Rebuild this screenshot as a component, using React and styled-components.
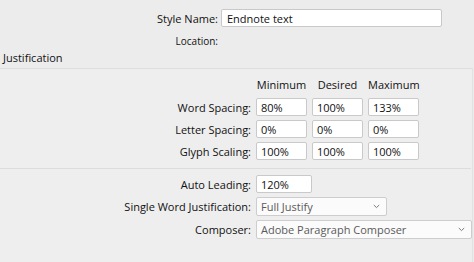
import React from "react";
import styled, { createGlobalStyle } from "styled-components";

const Global = createGlobalStyle`
  html, body { margin: 0; padding: 0; }
  body {
    background: #ececec;
    font-family: "Open Sans", "Noto Sans", sans-serif;
    font-size: 11px;
    color: #111111;
    width: 474px;
    height: 262px;
    overflow: hidden;
  }
`;

const Page = styled.div`
  display: flex;
  flex-direction: column;
  padding-top: 9px;
`;

const HeadRow = styled.div`
  display: flex;
  align-items: center;
  height: ${(p) => p.$h || 18}px;
  margin-top: ${(p) => p.$mt || 0}px;
`;

const HeadLabel = styled.div`
  width: 218px;
  text-align: right;
  margin-right: 3px;
  font-size: ${(p) => (p.$small ? 10 : 11)}px;
  white-space: nowrap;
`;

const TextBox = styled.div`
  box-sizing: border-box;
  width: ${(p) => p.$w}px;
  height: 18px;
  background: #ffffff;
  border: 1px solid #c9c9c9;
  border-radius: 2px;
  padding-left: ${(p) => p.$pl || 4}px;
  display: flex;
  align-items: center;
  font-size: 11px;
  color: #111111;
  white-space: nowrap;
`;

const SectionTitle = styled.div`
  margin-top: 4px;
  padding-left: 3px;
  height: 14px;
  line-height: 14px;
  font-size: 11px;
`;

const GroupBox = styled.div`
  margin-top: 3px;
  margin-right: 1px;
  height: 190px;
  border-top: 1px solid #dedede;
  border-right: 1px solid #e2e2e2;
  border-bottom: 1px solid #e4e4e4;
  background: #eeeeee;
  padding-top: 9px;
  display: flex;
  flex-direction: column;
`;

const Grid = styled.div`
  display: grid;
  grid-template-columns: 251px 51px 51px 51px;
  column-gap: 5px;
  row-gap: 4px;
  align-items: center;
`;

const ColHead = styled.div`
  text-align: center;
  height: 14px;
  line-height: 14px;
  margin-bottom: 2px;
`;

const RowLabel = styled.div`
  text-align: right;
  white-space: nowrap;
`;

const Separator = styled.div`
  height: 1px;
  background: #dcdcdc;
  margin-top: 8px;
  margin-right: 1px;
`;

const FieldList = styled.div`
  display: flex;
  flex-direction: column;
  gap: 4px;
  margin-top: 6px;
`;

const FieldRow = styled.div`
  display: flex;
  align-items: center;
  gap: 5px;
`;

const FieldLabel = styled.div`
  width: 251px;
  text-align: right;
  white-space: nowrap;
`;

const Select = styled.div`
  box-sizing: border-box;
  width: ${(p) => p.$w}px;
  height: 19px;
  background: #fbfbfb;
  border: 1px solid #cdcdcd;
  border-radius: 2px;
  padding: 0 6px 0 4px;
  display: flex;
  align-items: center;
  justify-content: space-between;
  color: #5a5a5a;
  white-space: nowrap;
`;

const Chevron = () => (
  <svg width="7" height="5" viewBox="0 0 7 5">
    <path d="M0.8 1 L3.5 3.6 L6.2 1" fill="none" stroke="#7a7a7a" strokeWidth="1" />
  </svg>
);

const rows = [
  ["Word Spacing:", "80%", "100%", "133%"],
  ["Letter Spacing:", "0%", "0%", "0%"],
  ["Glyph Scaling:", "100%", "100%", "100%"],
];

export default function App() {
  return (
    <>
      <Global />
      <Page>
        <HeadRow>
          <HeadLabel>Style Name:</HeadLabel>
          <TextBox $w={221} $pl={5}>Endnote text</TextBox>
        </HeadRow>
        <HeadRow $h={13} $mt={7}>
          <HeadLabel $small>Location:</HeadLabel>
        </HeadRow>
        <SectionTitle>Justification</SectionTitle>
        <GroupBox>
          <Grid>
            <span />
            <ColHead>Minimum</ColHead>
            <ColHead>Desired</ColHead>
            <ColHead>Maximum</ColHead>
            {rows.map((r) => (
              <React.Fragment key={r[0]}>
                <RowLabel>{r[0]}</RowLabel>
                <TextBox $w={51}>{r[1]}</TextBox>
                <TextBox $w={51}>{r[2]}</TextBox>
                <TextBox $w={51}>{r[3]}</TextBox>
              </React.Fragment>
            ))}
          </Grid>
          <Separator />
          <FieldList>
            <FieldRow>
              <FieldLabel>Auto Leading:</FieldLabel>
              <TextBox $w={56}>120%</TextBox>
            </FieldRow>
            <FieldRow>
              <FieldLabel>Single Word Justification:</FieldLabel>
              <Select $w={131}>
                Full Justify
                <Chevron />
              </Select>
            </FieldRow>
            <FieldRow>
              <FieldLabel>Composer:</FieldLabel>
              <Select $w={216}>
                Adobe Paragraph Composer
                <Chevron />
              </Select>
            </FieldRow>
          </FieldList>
        </GroupBox>
      </Page>
    </>
  );
}
